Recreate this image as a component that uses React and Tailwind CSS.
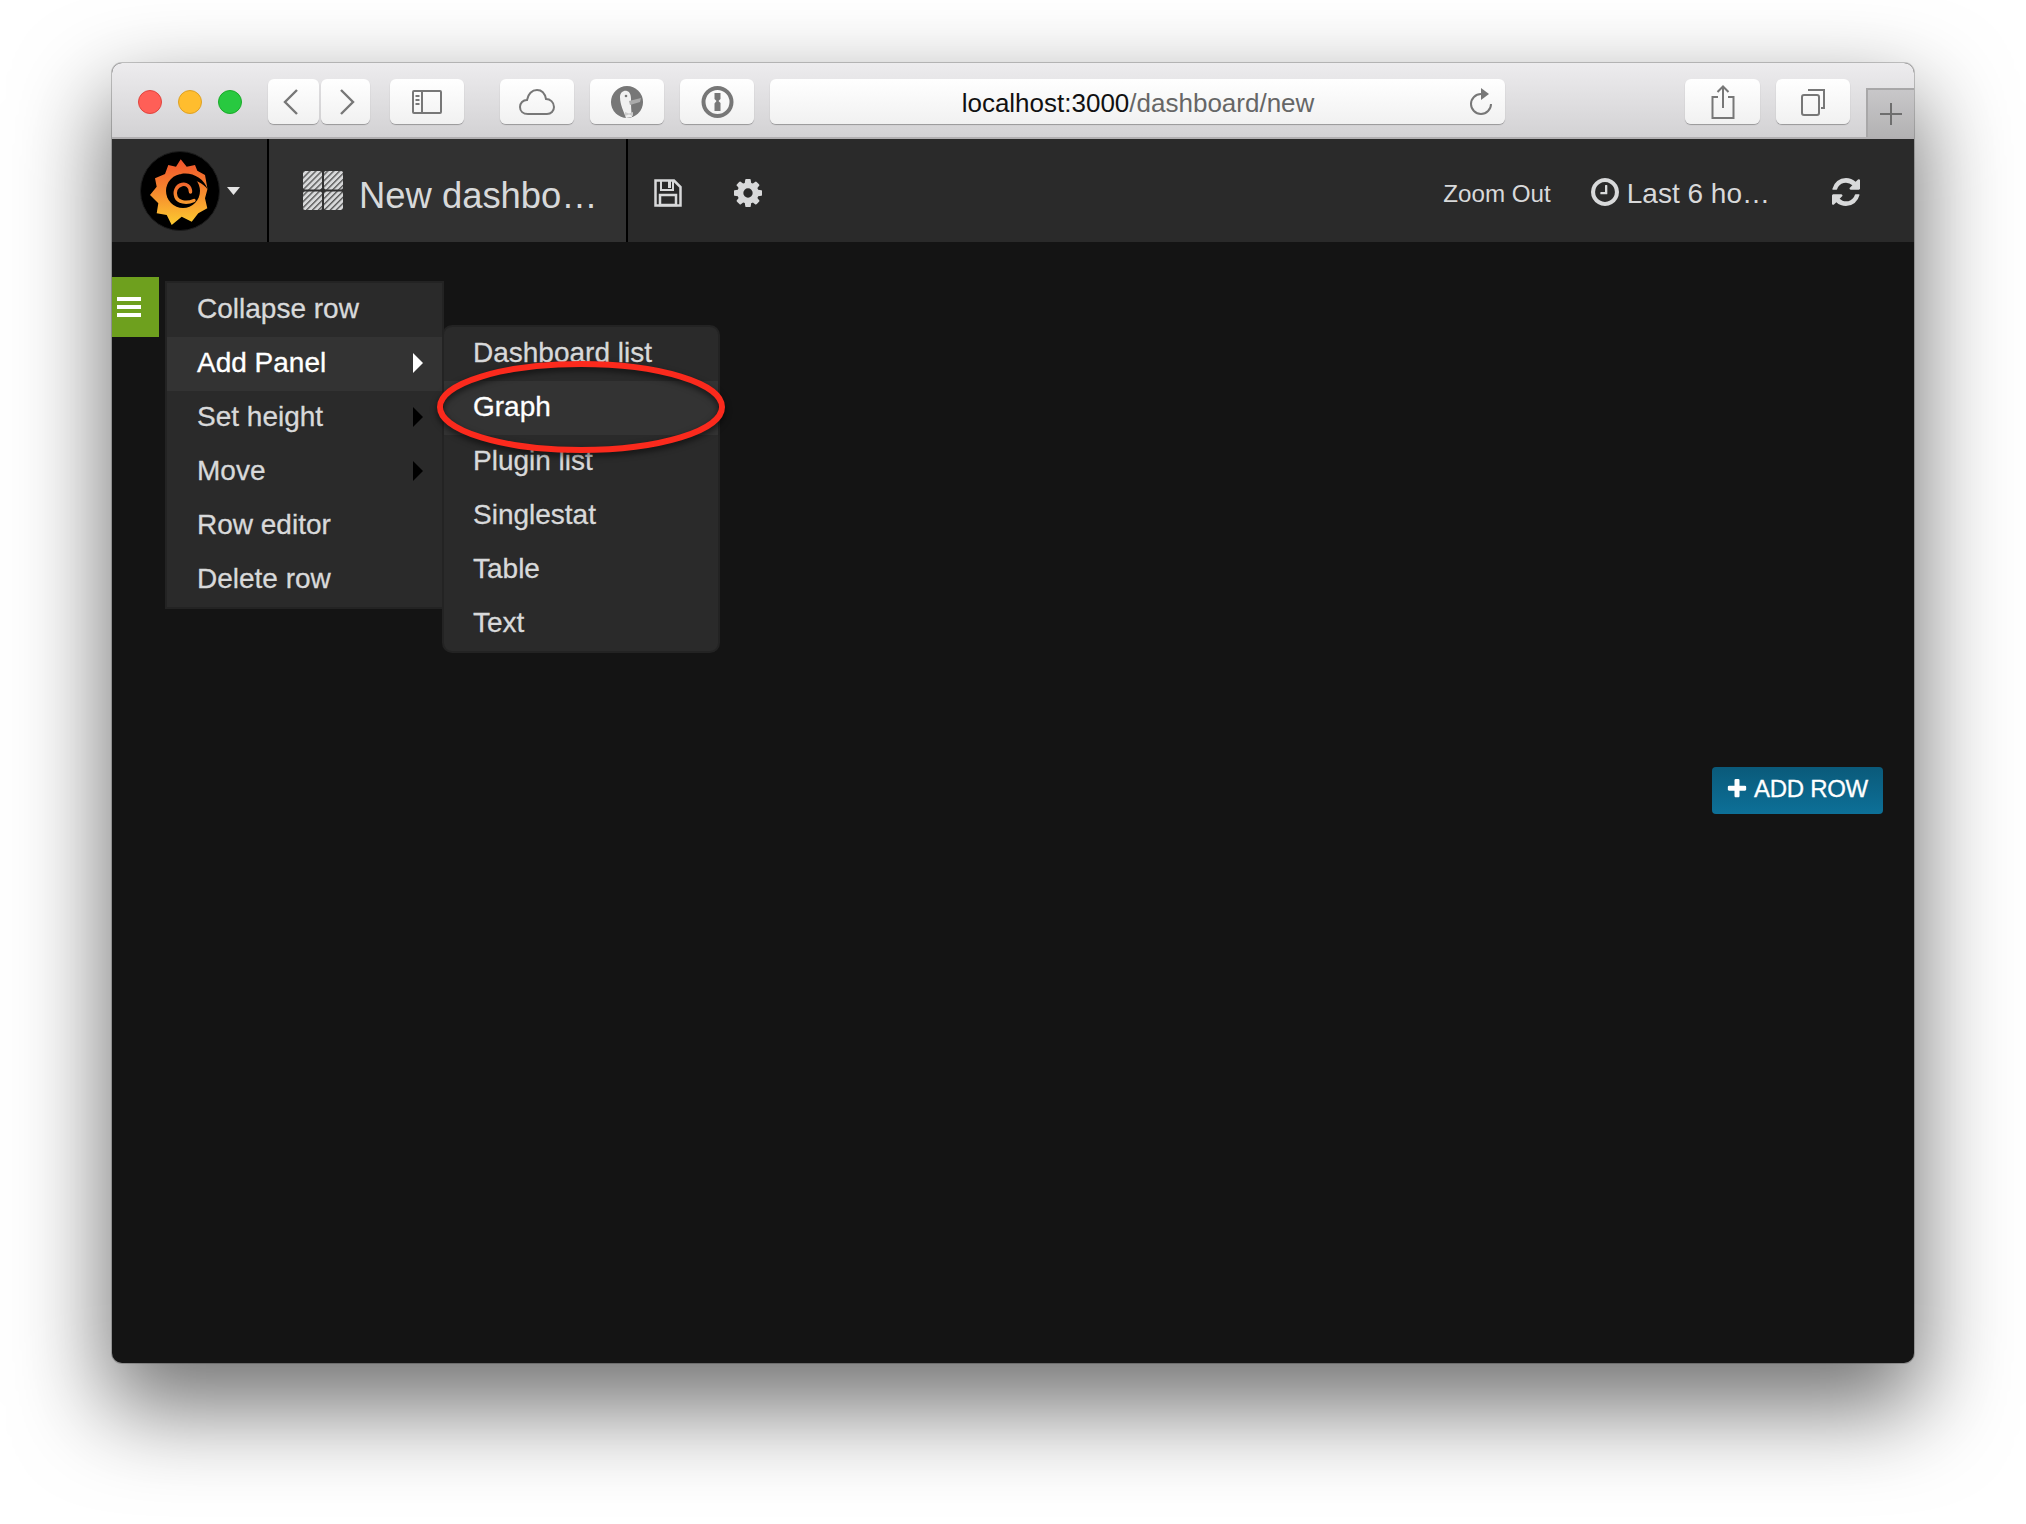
import React from 'react'

const SANS = "font-['Liberation_Sans',Arial,sans-serif]"

const ChromeButton = ({ className, children }) => (
	<div
		className={`flex h-[45px] items-center justify-center rounded-[6px] bg-gradient-to-b from-white to-[#f1f1f1] shadow-[0_1px_1px_rgba(0,0,0,0.3)] ${className}`}
	>
		{children}
	</div>
)

// font awesome 4 glyphs, the ones grafana shipped with
const FA = {
	cog: 'M1152 896q0-106-75-181t-181-75-181 75-75 181 75 181 181 75 181-75 75-181zm512-109v222q0 12-8 23t-20 13l-185 28q-19 54-39 91 35 50 107 138 10 12 10 25t-9 23q-27 37-99 108t-94 71q-12 0-26-9l-138-108q-44 23-91 38-16 136-29 186-7 28-36 28h-222q-14 0-24.500-8.500t-11.500-21.500l-28-184q-49-16-90-37l-141 107q-10 9-25 9-14 0-25-11-126-114-165-168-7-10-7-23 0-12 8-23 15-21 51-66.500t54-70.500q-27-50-41-99l-183-27q-13-2-21-12.500t-8-23.500v-222q0-12 8-23t19-13l186-28q14-46 39-92-40-57-107-138-10-12-10-24 0-10 9-23 26-36 98.500-107.500t94.500-71.500q13 0 26 10l138 107q44-23 91-38 16-136 29-186 7-28 36-28h222q14 0 24.500 8.500t11.500 21.500l28 184q49 16 90 37l142-107q9-9 24-9 13 0 25 10 129 119 165 170 7 8 7 22 0 12-8 23-15 21-51 66.500t-54 70.500q26 50 41 98l183 28q13 2 21 12.500t8 23.500z',
	clock: 'M1024 544v448q0 14-9 23t-23 9h-320q-14 0-23-9t-9-23v-64q0-14 9-23t23-9h224v-352q0-14 9-23t23-9h64q14 0 23 9t9 23zm416 352q0-148-73-273t-198-198-273-73-273 73-198 198-73 273 73 273 198 198 273 73 273-73 198-198 73-273zm224 0q0 209-103 385.500t-279.500 279.500-385.500 103-385.500-103-279.500-279.500-103-385.500 103-385.500 279.500-279.500 385.500-103 385.500 103 279.500 279.500 103 385.500z',
	refresh: 'M1639 1056q0 5-1 7-64 268-268 434.500t-478 166.500q-146 0-282.500-55t-243.500-157l-129 129q-19 19-45 19t-45-19-19-45v-448q0-26 19-45t45-19h448q26 0 45 19t19 45-19 45l-137 137q71 66 161 102t187 36q134 0 250-65t186-179q11-17 53-117 8-23 30-23h192q13 0 22.500 9.500t9.500 22.500zm25-800v448q0 26-19 45t-45 19h-448q-26 0-45-19t-19-45 19-45l138-138q-148-137-349-137-134 0-250 65t-186 179q-11 17-53 117-8 23-30 23h-199q-13 0-22.500-9.500t-9.500-22.500v-7q65-268 270-434.500t480-166.500q146 0 284 55.500t245 156.500l130-129q19-19 45-19t45 19 19 45z',
	plus: 'M1600 736v192q0 40-28 68t-68 28h-416v416q0 40-28 68t-68 28h-192q-40 0-68-28t-28-68v-416h-416q-40 0-68-28t-28-68v-192q0-40 28-68t68-28h416v-416q0-40 28-68t68-28h192q40 0 68 28t28 68v416h416q40 0 68 28t28 68z',
}

const FaIcon = ({ d, size = 28, className }) => (
	<svg className={className} width={size} height={size} viewBox="128 128 1536 1536" fill="currentColor">
		<path d={d} />
	</svg>
)

const SaveIcon = ({ className }) => (
	<svg className={className} width="28" height="28" viewBox="0 0 28 28" fill="none" stroke="currentColor">
		<path d="M1.5 1.5 H20 L26.5 8 V26.5 H1.5 Z" strokeWidth="2.5" />
		<path d="M7 2 V11 H19 V2" strokeWidth="2" />
		<path d="M14 2 h3 v7 h-3 z" fill="currentColor" stroke="none" />
		<rect x="6" y="16" width="16" height="10" strokeWidth="2.5" />
	</svg>
)

const GrafanaLogo = () => (
	<svg width="80" height="80" viewBox="0 0 80 80">
		<defs>
			<linearGradient id="sun" x1="0" y1="0" x2="0" y2="1">
				<stop offset="0" stopColor="#f0522c" />
				<stop offset="0.5" stopColor="#f68a2e" />
				<stop offset="1" stopColor="#fccb30" />
			</linearGradient>
			<linearGradient id="curl" x1="0" y1="0" x2="0" y2="1">
				<stop offset="0" stopColor="#f2672e" />
				<stop offset="1" stopColor="#f8992e" />
			</linearGradient>
		</defs>
		<circle cx="40" cy="40" r="39.5" fill="#000" stroke="#1c1c1c" strokeWidth="1" />
		<path
			fill="url(#sun)"
			d="M40.7 8.3 L46.7 15.7 L55 14 L57.3 19.7 L65 24 L67.5 38 L65 47.3 L67.3 57.3 L58.3 62.3 L51.7 70.7 L41.7 65.7 L31.7 74 L26.7 64 L16.7 62.3 L18.3 52.3 L10 44 L16.7 35.7 L15 27.3 L25 23 L28.3 14 L36 15.7 Z"
		/>
		{/* swirl: black disc with a tail, orange curl inside */}
		<circle cx="43" cy="40" r="17" fill="#000" />
		<path fill="#000" d="M68 39 C64 27 52 21 41 23 L44 29 C52 28 62 30 68 39 Z" />
		<path
			d="M50.5 41 C50.5 35 46 32.500 42 33.500 C36 35 34 41 36 46 C38 51 46 53 54 49.500"
			fill="none"
			stroke="url(#curl)"
			strokeWidth="3.4"
			strokeLinecap="round"
		/>
	</svg>
)

const DashIcon = () => (
	<svg width="40" height="39" viewBox="0 0 40 39">
		<defs>
			<pattern id="hatch" width="4.2" height="4.2" patternUnits="userSpaceOnUse" patternTransform="rotate(45)">
				<rect width="4.2" height="4.2" fill="#d8d9da" />
				<rect width="1.4" height="4.2" fill="#5a5a5a" />
			</pattern>
		</defs>
		<rect x="0" y="0" width="19" height="18.5" rx="2" fill="url(#hatch)" />
		<rect x="21" y="0" width="19" height="18.5" rx="2" fill="url(#hatch)" />
		<rect x="0" y="20.5" width="19" height="18.5" rx="2" fill="url(#hatch)" />
		<rect x="21" y="20.5" width="19" height="18.5" rx="2" fill="url(#hatch)" />
	</svg>
)

const MenuItem = ({ label, active, arrow, className = 'pl-[29px]' }) => (
	<div
		className={`flex h-[54px] items-center justify-between pr-[19px] pb-[2px] text-[28px] [-webkit-text-stroke:0.3px_currentColor] ${className} ${
			active ? 'bg-[#333333] text-white' : 'text-[#d8d9da]'
		}`}
	>
		<span>{label}</span>
		{arrow && (
			<svg width="10" height="20" viewBox="0 0 10 20">
				<path d="M0 0 L10 10 L0 20 Z" fill={active ? '#fff' : '#000'} />
			</svg>
		)}
	</div>
)

const App = () => {
	return (
		<div className={`h-[1524px] w-[2026px] overflow-hidden bg-white pt-[63px] pl-[112px] ${SANS}`}>
			<div className="flex h-[1300px] w-[1802px] flex-col overflow-hidden rounded-[10px] bg-[#141414] shadow-[0_40px_90px_6px_rgba(0,0,0,0.55)] ring-1 ring-black/20">
				{/* safari toolbar */}
				<div className="flex h-[76px] shrink-0 items-center border-b-[2px] border-[#b1afb1] bg-gradient-to-b from-[#edecee] to-[#d3d2d4] pt-[3px] pl-[26px]">
					<div className="h-[24px] w-[24px] rounded-full border border-[#e0443e] bg-[#ff5f57]" />
					<div className="ml-[16px] h-[24px] w-[24px] rounded-full border border-[#dea123] bg-[#ffbd2e]" />
					<div className="ml-[16px] h-[24px] w-[24px] rounded-full border border-[#1aab29] bg-[#28c940]" />
					<ChromeButton className="ml-[26px] w-[51px] pr-[5px]">
						<svg width="16" height="26" viewBox="0 0 16 26" fill="none" stroke="#777" strokeWidth="2.4">
							<path d="M14 1 L2 13 L14 25" />
						</svg>
					</ChromeButton>
					<ChromeButton className="ml-[2px] w-[49px] pl-[2px]">
						<svg width="16" height="26" viewBox="0 0 16 26" fill="none" stroke="#777" strokeWidth="2.4">
							<path d="M2 1 L14 13 L2 25" />
						</svg>
					</ChromeButton>
					<ChromeButton className="ml-[20px] w-[74px]">
						<svg width="30" height="24" viewBox="0 0 30 24" fill="none" stroke="#777" strokeWidth="2">
							<rect x="1" y="1" width="28" height="22" rx="1" />
							<path d="M10 1 V23" />
							<path d="M3.5 6 H7.5 M3.5 10 H7.5 M3.5 14 H7.5" />
						</svg>
					</ChromeButton>
					<ChromeButton className="ml-[36px] w-[74px]">
						<svg width="36" height="26" viewBox="0 0 36 26" fill="none" stroke="#777" strokeWidth="2">
							<path d="M9 25 C4 25 1 22 1 18 C1 14 4 11 8 11 C9 5 13 1 18 1 C23 1 26 5 27 10 C31 10 35 13 35 18 C35 22 32 25 28 25 Z" />
						</svg>
					</ChromeButton>
					<ChromeButton className="ml-[16px] w-[74px]">
						<svg width="32" height="32" viewBox="0 0 32 32">
							<circle cx="16" cy="16" r="16" fill="#777" />
							<path d="M9 11 C9 6 13 4 16 5 C19 6 20 9 20 13 C20 19 20 24 21 31 L15 32 C13 26 9 19 9 11 Z" fill="#f0f0f0" />
							<circle cx="15" cy="10" r="1.3" fill="#777" />
							<path d="M18 15 C22 14 26 13 30 12 L29 16 L19 19 Z" fill="#aaa" />
							<path d="M14 26 L18 27.5 L22 26 L22 30 L18 28.5 L14 30 Z" fill="#ccc" />
						</svg>
					</ChromeButton>
					<ChromeButton className="ml-[16px] w-[74px]">
						<svg width="33" height="32" viewBox="0 0 33 32">
							<circle cx="16.5" cy="16" r="14" fill="none" stroke="#777" strokeWidth="4" />
							<path d="M13.5 7 H19.5 V13 L17.5 15 L19.5 17 V25 H13.5 V17.5 L15.5 15 L13.5 13 Z" fill="#777" />
						</svg>
					</ChromeButton>
					<ChromeButton className="relative ml-[16px] w-[735px] pl-[1px] text-[26px] text-[#111]">
						<span className="mt-[3px]">
							localhost:3000<span className="text-[#666]">/dashboard/new</span>
						</span>
						<svg className="absolute right-[12px]" width="24" height="30" viewBox="0 0 24 30" fill="none" stroke="#777" strokeWidth="2">
							<path d="M12 7 A10 10 0 1 0 22 17" />
							<path d="M12 1 L20 7 L12 13 Z" fill="#777" stroke="none" />
						</svg>
					</ChromeButton>
					<ChromeButton className="ml-[180px] w-[75px]">
						<svg width="24" height="34" viewBox="0 0 24 34" fill="none" stroke="#777" strokeWidth="2">
							<path d="M7 12 H1.5 V33 H22.5 V12 H17" />
							<path d="M12 23 V2 M6.5 7 L12 1.5 L17.5 7" />
						</svg>
					</ChromeButton>
					<ChromeButton className="ml-[16px] w-[74px]">
						<svg width="24" height="28" viewBox="0 0 24 28" fill="none" stroke="#777" strokeWidth="2">
							<rect x="1" y="7" width="17" height="20" rx="2" />
							<path d="M7 2 H23 V20 H20" />
						</svg>
					</ChromeButton>
					<div className="ml-[16px] flex h-[49px] w-[48px] items-center justify-center self-end border-t-[2px] border-l-[2px] border-[#a8a7a8] bg-gradient-to-b from-[#c8c7c9] to-[#b3b2b3]">
						<svg width="22" height="22" viewBox="0 0 22 22" stroke="#6e6e6e" strokeWidth="2">
							<path d="M11 0 V22 M0 11 H22" />
						</svg>
					</div>
				</div>

				{/* grafana navbar */}
				<div className="flex h-[103px] shrink-0 items-center bg-[#2a2a2a] text-[#d8d9da]">
					<div className="flex h-full w-[155px] items-center bg-[#2e2e2e] pl-[28px]">
						<GrafanaLogo />
						<svg className="ml-[7px]" width="13" height="8" viewBox="0 0 13 8">
							<path d="M0 0 H13 L6.5 8 Z" fill="#e4e4e4" />
						</svg>
					</div>
					<div className="flex h-full w-[361px] items-center border-x-[2px] border-black bg-[#313131] pl-[34px]">
						<DashIcon />
						<span className="mt-[11px] ml-[16px] text-[36.4px] whitespace-nowrap">New dashbo…</span>
					</div>
					<SaveIcon className="mt-[5px] ml-[26px]" />
					<FaIcon d={FA.cog} className="mt-[5px] ml-[52px]" />
					<span className="mt-[7px] ml-auto text-[24.2px]">Zoom Out</span>
					<FaIcon d={FA.clock} className="mt-[3px] ml-[40px]" />
					<span className="mt-[7px] ml-[8px] text-[28px] whitespace-nowrap">Last 6 ho…</span>
					<FaIcon d={FA.refresh} className="mt-[3px] mr-[54px] ml-[62px]" />
				</div>

				{/* dashboard */}
				<div className="relative flex grow flex-col">
					<div className="mt-[35px] flex h-[60px] w-[47px] flex-col justify-center gap-[4px] bg-[#6ea01e] pl-[5px]">
						<div className="h-[4px] w-[24px] bg-white" />
						<div className="h-[4px] w-[24px] bg-white" />
						<div className="h-[4px] w-[24px] bg-white" />
					</div>

					<div className="absolute top-[39px] left-[53px] w-[279px] border-[2px] border-[#232323] bg-[#2a2a2a]">
						<MenuItem label="Collapse row" className="pl-[30px]" />
						<MenuItem label="Add Panel" active arrow className="pl-[30px]" />
						<MenuItem label="Set height" arrow className="pl-[30px]" />
						<MenuItem label="Move" arrow className="pl-[30px]" />
						<MenuItem label="Row editor" className="pl-[30px]" />
						<MenuItem label="Delete row" className="pl-[30px]" />
					</div>

					<div className="absolute top-[83px] left-[330px] w-[278px] rounded-[10px] border-[2px] border-[#232323] bg-[#2a2a2a]">
						<MenuItem label="Dashboard list" />
						<MenuItem label="Graph" active />
						<MenuItem label="Plugin list" />
						<MenuItem label="Singlestat" />
						<MenuItem label="Table" />
						<MenuItem label="Text" />
					</div>

					<svg className="pointer-events-none absolute top-[118px] left-[323px] drop-shadow-[0_3px_3px_rgba(0,0,0,0.6)]" width="294" height="97" viewBox="0 0 294 97">
						<ellipse cx="146" cy="47" rx="141" ry="43" fill="none" stroke="#fb2a1d" strokeWidth="6" />
					</svg>

					<button className="mt-[430px] mr-[31px] flex h-[47px] w-[171px] items-center justify-center gap-[7px] self-end rounded-[4px] bg-gradient-to-b from-[#0a5a7a] to-[#0d7098] pb-[3px] text-[24px] tracking-[-0.3px] text-white [-webkit-text-stroke:0.3px_currentColor]">
						<FaIcon d={FA.plus} size={20} />
						ADD ROW
					</button>
				</div>
			</div>
		</div>
	)
}

export default App
